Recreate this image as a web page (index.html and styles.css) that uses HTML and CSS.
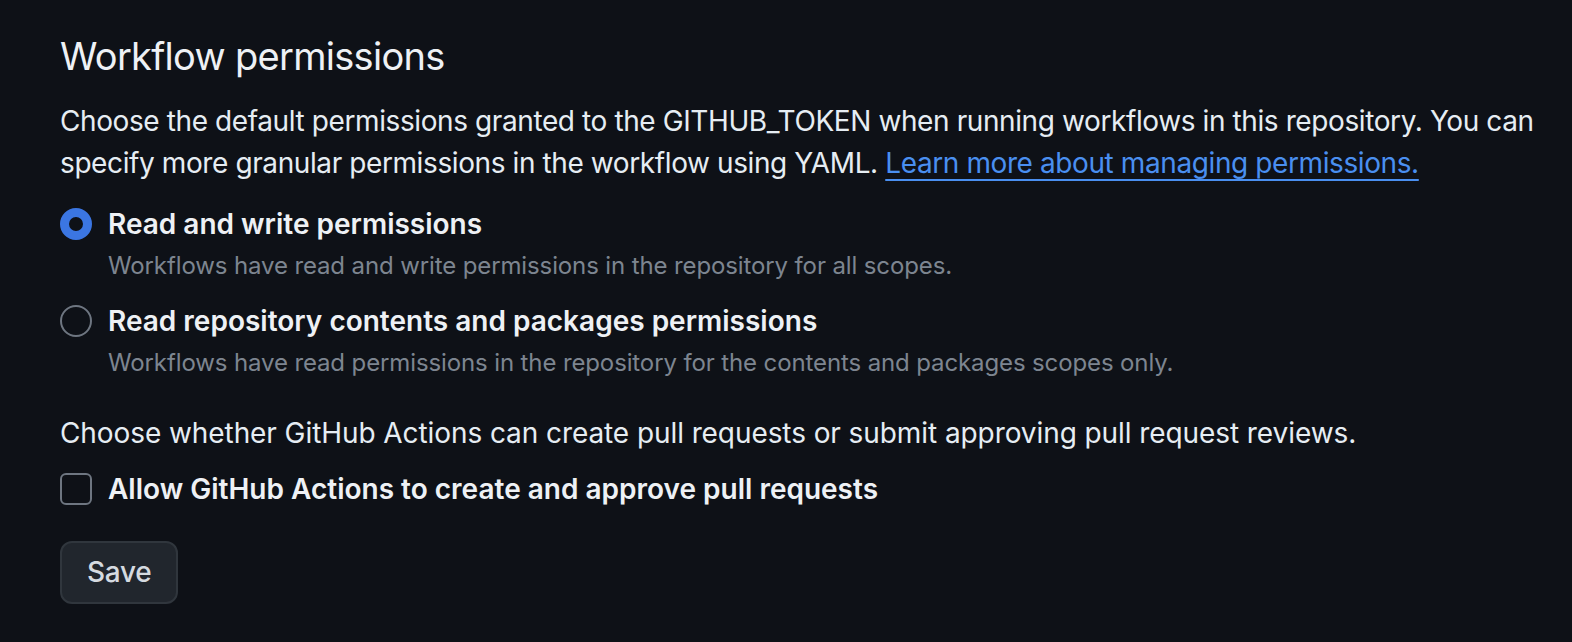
FILE: index.html
```html
<!DOCTYPE html>
<html lang="en">
<head>
<meta charset="utf-8">
<title>Workflow permissions</title>
<link rel="stylesheet" href="styles.css">
</head>
<body>
<main class="page">
  <h2 class="heading">Workflow permissions</h2>
  <p class="intro">Choose the default permissions granted to the GITHUB_TOKEN when running workflows in this repository. You can specify more granular permissions in the workflow using YAML. <a class="link" href="#">Learn more about managing permissions.</a></p>

  <div class="option option-first">
    <span class="radio radio-checked"></span>
    <div class="option-body">
      <div class="option-label">Read and write permissions</div>
      <div class="option-note">Workflows have read and write permissions in the repository for all scopes.</div>
    </div>
  </div>

  <div class="option option-second">
    <span class="radio"></span>
    <div class="option-body">
      <div class="option-label">Read repository contents and packages permissions</div>
      <div class="option-note">Workflows have read permissions in the repository for the contents and packages scopes only.</div>
    </div>
  </div>

  <p class="intro intro-second">Choose whether GitHub Actions can create pull requests or submit approving pull request reviews.</p>

  <div class="option option-check">
    <span class="checkbox"></span>
    <div class="option-body">
      <div class="option-label">Allow GitHub Actions to create and approve pull requests</div>
    </div>
  </div>

  <button class="btn" type="button">Save</button>
</main>
</body>
</html>
```

FILE: styles.css
```css
html, body {
  margin: 0;
  padding: 0;
  background: #0e1117;
}

body {
  font-family: Inter, "Noto Sans", "Liberation Sans", sans-serif;
  color: #e6edf3;
}

.page {
  padding: 26px 0 0 60px;
  width: 1500px;
}

.heading {
  margin: 0;
  font-size: 38px;
  line-height: 60px;
  font-weight: 400;
  letter-spacing: -0.7px;
  color: #eef1f5;
}

.intro {
  margin: 14px 0 0;
  font-size: 28px;
  line-height: 42px;
  letter-spacing: -0.4px;
  color: #e6edf3;
}

.link {
  color: #4a8ff0;
  text-decoration: underline;
  text-decoration-thickness: 2px;
  text-underline-offset: 6px;
}

.option {
  display: flex;
  align-items: flex-start;
  gap: 16px;
}

.option-first { margin-top: 19px; }
.option-second { margin-top: 16px; }
.option-check { margin-top: 14px; }

.option-label {
  font-size: 28px;
  line-height: 42px;
  font-weight: 600;
  color: #eef1f5;
}

.option-note {
  margin-top: 3px;
  font-size: 24px;
  line-height: 36px;
  letter-spacing: -0.12px;
  color: #7d8590;
}

.radio {
  flex: none;
  box-sizing: border-box;
  width: 32px;
  height: 32px;
  margin-top: 5px;
  border-radius: 50%;
  border: 2px solid #6e7681;
}

.radio-checked {
  border: 9px solid #3b76e2;
  background: #0e1117;
}

.checkbox {
  flex: none;
  box-sizing: border-box;
  width: 32px;
  height: 32px;
  margin-top: 5px;
  border-radius: 6px;
  border: 2px solid #6e7681;
}

.intro-second {
  margin-top: 31px;
  letter-spacing: -0.08px;
}

.btn {
  display: block;
  margin-top: 31px;
  box-sizing: border-box;
  height: 63px;
  padding: 0 25px;
  border: 2px solid #30363d;
  border-radius: 12px;
  background: #21262d;
  color: #d5dae0;
  font-family: Inter, "Noto Sans", "Liberation Sans", sans-serif;
  font-size: 28px;
  line-height: 59px;
  font-weight: 500;
  letter-spacing: -0.3px;
}
```
